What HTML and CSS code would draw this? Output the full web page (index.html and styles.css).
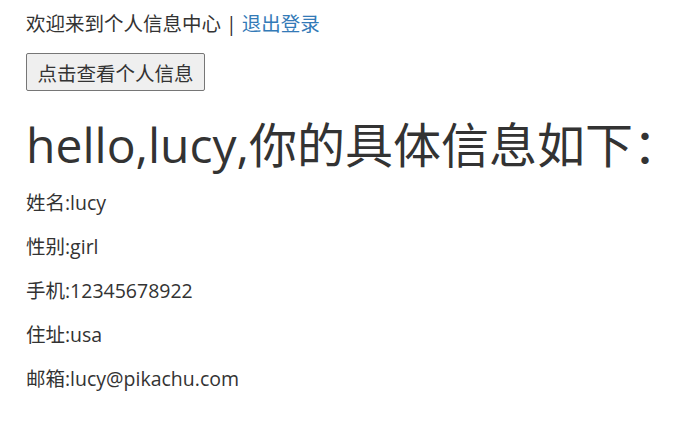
FILE: index.html
```html
<!DOCTYPE html>
<html lang="zh-CN">
<head>
<meta charset="utf-8">
<title>个人信息中心</title>
<link rel="stylesheet" href="styles.css">
</head>
<body>
<div class="page">
  <div class="topbar">欢迎来到个人信息中心 | <a class="logout" href="#">退出登录</a></div>
  <button class="btn" type="button">点击查看个人信息</button>
  <h1 class="title">hello,lucy,你的具体信息如下：</h1>
  <p class="info">姓名:lucy</p>
  <p class="info">性别:girl</p>
  <p class="info">手机:12345678922</p>
  <p class="info">住址:usa</p>
  <p class="info">邮箱:lucy@pikachu.com</p>
</div>
</body>
</html>
```
FILE: styles.css
```css
html, body {
  margin: 0;
  padding: 0;
  background: #fff;
}
body {
  font-family: "Open Sans", "Noto Sans CJK SC", sans-serif;
  color: #333;
  font-size: 19.5px;
  line-height: 28px;
}
.page {
  padding: 10px 26px 0;
}
.topbar {
  height: 28px;
}
.logout {
  color: #337ab7;
  text-decoration: none;
}
.btn {
  display: block;
  margin-top: 15px;
  width: 179px;
  height: 38px;
  padding: 0;
  font-family: inherit;
  font-size: 19.5px;
  color: #333;
  background: #efefef;
  border: 1px solid #767676;
  border-radius: 2px;
}
.title {
  font-size: 48px;
  font-weight: 400;
  line-height: 52.8px;
  margin: 28px 0 17px;
  white-space: nowrap;
}
.info {
  margin: 0 0 16px;
}
```
